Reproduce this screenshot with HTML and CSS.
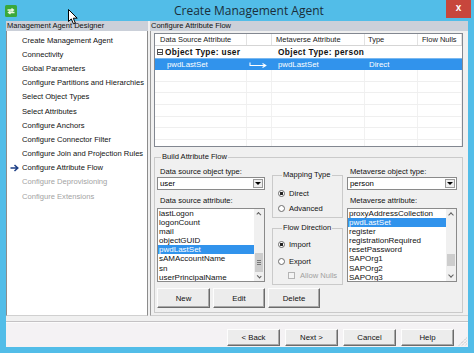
FILE: index.html
```html
<!DOCTYPE html>
<html>
<head>
<meta charset="utf-8">
<link rel="stylesheet" href="styles.css">
</head>
<body>
<div class="window">
  <div class="titlebar">
    <div class="appicon">
      <svg width="12" height="12" viewBox="0 0 12 12"><rect x="0" y="0" width="12" height="12" rx="1.5" fill="#3aa83a"/><path d="M2.5 5 H8 M6.5 3.5 L8.5 5 L6.5 6.5 M9.5 7.5 H4 M5.5 6 L3.5 7.5 L5.5 9" stroke="#e9f7e0" stroke-width="1.3" fill="none"/></svg>
    </div>
    <div class="title">Create Management Agent</div>
    <div class="close">x</div>
  </div>
  <div class="client">
    <div class="panes">
      <div class="leftpane">
        <div class="panehead">Management Agent Designer</div>
        <ul class="steps">
          <li><span class="mark"></span>Create Management Agent</li>
          <li><span class="mark"></span>Connectivity</li>
          <li><span class="mark"></span>Global Parameters</li>
          <li><span class="mark"></span>Configure Partitions and Hierarchies</li>
          <li><span class="mark"></span>Select Object Types</li>
          <li><span class="mark"></span>Select Attributes</li>
          <li><span class="mark"></span>Configure Anchors</li>
          <li><span class="mark"></span>Configure Connector Filter</li>
          <li><span class="mark"></span>Configure Join and Projection Rules</li>
          <li><span class="mark"><svg width="9" height="8" viewBox="0 0 9 8"><path d="M0.5 4 H7.5 M4.5 1 L7.8 4 L4.5 7" stroke="#1d3f86" stroke-width="1.5" fill="none"/></svg></span>Configure Attribute Flow</li>
          <li class="off"><span class="mark"></span>Configure Deprovisioning</li>
          <li class="off"><span class="mark"></span>Configure Extensions</li>
        </ul>
      </div>
      <div class="rightpane">
        <div class="panehead">Configure Attribute Flow</div>
        <div class="rightbody">
          <div class="grid">
            <div class="row head">
              <div class="c">Data Source Attribute</div>
              <div class="c"></div>
              <div class="c">Metaverse Attribute</div>
              <div class="c">Type</div>
              <div class="c">Flow Nulls</div>
            </div>
            <div class="row obj">
              <div class="c"><span class="minus"></span>Object Type: user</div>
              <div class="c"></div>
              <div class="c ind">Object Type: person</div>
              <div class="c"></div>
              <div class="c"></div>
            </div>
            <div class="row sel">
              <div class="c ind2">pwdLastSet</div>
              <div class="c arrowc"><svg width="18" height="7" viewBox="0 0 18 7"><path d="M1 1.5 V4.5 H16.5 M13.5 2.5 L16.8 4.5 L13.5 6.5" stroke="#ffffff" stroke-width="1.1" fill="none"/></svg></div>
              <div class="c ind">pwdLastSet</div>
              <div class="c">Direct</div>
              <div class="c"></div>
            </div>
            <div class="row empty"><div class="c"></div><div class="c"></div><div class="c"></div><div class="c"></div><div class="c"></div></div>
            <div class="row empty"><div class="c"></div><div class="c"></div><div class="c"></div><div class="c"></div><div class="c"></div></div>
            <div class="row empty"><div class="c"></div><div class="c"></div><div class="c"></div><div class="c"></div><div class="c"></div></div>
            <div class="row empty"><div class="c"></div><div class="c"></div><div class="c"></div><div class="c"></div><div class="c"></div></div>
            <div class="row empty"><div class="c"></div><div class="c"></div><div class="c"></div><div class="c"></div><div class="c"></div></div>
            <div class="row empty"><div class="c"></div><div class="c"></div><div class="c"></div><div class="c"></div><div class="c"></div></div>
            <div class="row empty"><div class="c"></div><div class="c"></div><div class="c"></div><div class="c"></div><div class="c"></div></div>
          </div>
          <fieldset class="build">
            <legend>Build Attribute Flow</legend>
            <div class="buildcols">
              <div class="col col1">
                <div class="lbl">Data source object type:</div>
                <div class="combo"><span class="val">user</span><span class="ddbtn"><span class="tri"></span></span></div>
                <div class="lbl lbl2">Data source attribute:</div>
                <div class="listbox">
                  <div class="items">
                    <div class="item">lastLogon</div>
                    <div class="item">logonCount</div>
                    <div class="item">mail</div>
                    <div class="item">objectGUID</div>
                    <div class="item selected">pwdLastSet</div>
                    <div class="item">sAMAccountName</div>
                    <div class="item">sn</div>
                    <div class="item">userPrincipalName</div>
                  </div>
                  <div class="vscroll">
                    <span class="sarrow up"></span>
                    <div class="track"><div class="thumb t1"><span class="grip"></span></div></div>
                    <span class="sarrow down"></span>
                  </div>
                </div>
              </div>
              <div class="col col2">
                <fieldset class="grp map">
                  <legend>Mapping Type</legend>
                  <div class="opt first"><span class="rb on"></span>Direct</div>
                  <div class="opt second"><span class="rb"></span>Advanced</div>
                </fieldset>
                <fieldset class="grp flow">
                  <legend>Flow Direction</legend>
                  <div class="opt first"><span class="rb on"></span>Import</div>
                  <div class="opt second2"><span class="rb"></span>Export</div>
                  <div class="opt third off"><span class="cb"></span>Allow Nulls</div>
                </fieldset>
              </div>
              <div class="col col3">
                <div class="lbl">Metaverse object type:</div>
                <div class="combo"><span class="val">person</span><span class="ddbtn"><span class="tri"></span></span></div>
                <div class="lbl lbl2">Metaverse attribute:</div>
                <div class="listbox">
                  <div class="items">
                    <div class="item">proxyAddressCollection</div>
                    <div class="item selected">pwdLastSet</div>
                    <div class="item">register</div>
                    <div class="item">registrationRequired</div>
                    <div class="item">resetPassword</div>
                    <div class="item">SAPOrg1</div>
                    <div class="item">SAPOrg2</div>
                    <div class="item">SAPOrg3</div>
                    <div class="item">SAPOrg4</div>
                  </div>
                  <div class="vscroll">
                    <span class="sarrow up"></span>
                    <div class="track"><div class="thumb t2"></div></div>
                    <span class="sarrow down"></span>
                  </div>
                </div>
              </div>
            </div>
            <div class="buildbtns">
              <div class="btn bnew">New</div>
              <div class="btn bedit">Edit</div>
              <div class="btn bdel">Delete</div>
            </div>
          </fieldset>
        </div>
      </div>
    </div>
    <div class="sep"></div>
    <div class="footer">
      <div class="btn fb">&lt; Back</div>
      <div class="btn fb">Next &gt;</div>
      <div class="btn fb">Cancel</div>
      <div class="btn fb">Help</div>
      <div class="grip-corner">
        <svg width="9" height="9" viewBox="0 0 9 9"><path d="M8.5 1 L1 8.5 M8.5 4 L4 8.5 M8.5 7 L7 8.5" stroke="#a8a8a8" stroke-width="1" stroke-dasharray="1 1" fill="none"/></svg>
      </div>
    </div>
  </div>
  <div class="cursor">
    <svg width="11" height="16" viewBox="0 0 11 16"><path d="M0.5 0.5 L0.5 12.5 L3.3 9.9 L5.4 14.8 L7.3 14 L5.3 9.2 L9.2 9.2 Z" fill="#ffffff" stroke="#000000" stroke-width="1"/></svg>
  </div>
</div>
</body>
</html>
```
FILE: styles.css
```css
* { box-sizing: border-box; }
html, body { margin: 0; padding: 0; }
body {
  width: 474px;
  height: 353px;
  overflow: hidden;
  font-family: "Liberation Sans", Arial, sans-serif;
  font-size: 8px;
  color: #000;
}
.window {
  position: relative;
  width: 474px;
  height: 353px;
  background: #52bde8;
  display: flex;
  flex-direction: column;
  padding: 0 6px 6px 6px;
}
.titlebar {
  height: 21px;
  flex: none;
  display: flex;
  align-items: flex-start;
}
.appicon {
  margin: 5px 0 0 -1px;
  width: 12px;
  height: 12px;
  line-height: 0;
}
.title {
  margin: 3px 0 0 157px;
  font-family: "Open Sans", "Noto Sans", sans-serif;
  font-size: 12px;
  line-height: 16px;
  color: #1a2e3a;
}
.close {
  margin: 0 -3px 0 auto;
  width: 25px;
  height: 18px;
  background: #c7463c;
  color: #fff;
  font-weight: bold;
  font-size: 10px;
  line-height: 16px;
  text-align: center;
}
.client {
  flex: 1;
  background: #f0f0f0;
  display: flex;
  flex-direction: column;
}
.panes {
  height: 295px;
  flex: none;
  display: flex;
  gap: 2px;
}
.panehead {
  height: 10px;
  line-height: 10px;
  font-size: 7.5px;
  padding-left: 1px;
  background: #cbd0d9;
  color: #111;
  white-space: nowrap;
}
.leftpane {
  width: 142px;
  display: flex;
  flex-direction: column;
}
.steps {
  flex: 1;
  margin: 0;
  list-style: none;
  padding: 2px 0 0 0;
  background: #fff;
  border-left: 1px solid #8c8c8c;
  border-right: 1px solid #8c8c8c;
  border-bottom: 1px solid #d0d0d0;
}
.steps li {
  display: flex;
  align-items: center;
  height: 14.2px;
  font-size: 7.6px;
  color: #111;
  white-space: nowrap;
}
.steps li.off { color: #a3a3a3; }
.mark {
  width: 15px;
  flex: none;
  padding-left: 3px;
  line-height: 0;
}
.rightpane {
  flex: 1;
  display: flex;
  flex-direction: column;
}
.rightbody {
  flex: 1;
  border-left: 1px solid #9a9a9a;
  border-bottom: 1px solid #d0d0d0;
  padding: 2px 4px 0 3px;
}
.grid {
  width: 309px;
  height: 114px;
  border: 1px solid #828790;
  background: #fff;
  overflow: hidden;
}
.row {
  display: grid;
  grid-template-columns: 92px 25px 93px 53px 44px;
  height: 12px;
}
.row .c {
  white-space: nowrap;
  overflow: hidden;
  display: flex;
  align-items: center;
}
.head {
  height: 12px;
  border-bottom: 1px solid #d5d5d5;
  font-size: 7.5px;
  color: #222;
}
.head .c {
  border-right: 1px solid #e2e2e2;
  padding-left: 5px;
}
.head .c:nth-child(3) { padding-left: 4px; }
.head .c:nth-child(4) { padding-left: 3px; }
.head .c:nth-child(5) { padding-left: 4px; }
.obj {
  font-weight: bold;
  font-size: 8.3px;
  letter-spacing: 0.35px;
  color: #111;
}
.obj .c:first-child { padding-left: 2px; }
.minus {
  width: 6px;
  height: 6px;
  border: 1px solid #555;
  margin-right: 2px;
  flex: none;
  background: linear-gradient(#444, #444) center / 4px 1px no-repeat;
}
.ind { padding-left: 6px; }
.ind2 { padding-left: 12px; }
.sel {
  background: #3193ec;
  border-top: 1px solid #7ab8f0;
  color: #fff;
  font-size: 7.8px;
}
.sel .c:nth-child(4) { padding-left: 4px; }
.arrowc { padding-left: 2px; line-height: 0; }
.empty {
  height: 11.67px;
  border-bottom: 1px solid #efefef;
}
.empty .c { border-right: 1px solid #f1f1f1; }
fieldset {
  margin: 0;
  padding: 0;
  min-width: 0;
  border: 1px solid #cacaca;
}
legend {
  padding: 0 1px;
  margin-left: 3px;
  height: 10px;
  line-height: 10px;
  font-size: 7.6px;
  color: #111;
}
.build {
  width: 309px;
  margin-top: 5px;
  padding: 0 4px 4px 3px;
}
.buildcols {
  display: flex;
  align-items: flex-start;
}
.col1 { width: 107px; padding-top: 5px; }
.col2 { width: 71px; margin-left: 7px; padding-top: 8px; }
.col3 { width: 109px; margin-left: 5px; padding-top: 5px; }
.lbl {
  height: 10px;
  line-height: 10px;
  font-size: 7.6px;
  color: #111;
  white-space: nowrap;
  padding-left: 2px;
}
.col1 .lbl { padding-left: 2px; }
.lbl2 { margin-top: 6px; }
.combo {
  height: 13px;
  display: flex;
  border: 1px solid #8a8a8a;
  background: #fff;
  margin-left: -1px;
}
.combo .val {
  flex: 1;
  padding-left: 2px;
  line-height: 11px;
  font-size: 7.8px;
}
.ddbtn {
  width: 10px;
  margin: 1px;
  border: 1px solid #9a9a9a;
  background: #eeeeee;
  display: flex;
  align-items: center;
  justify-content: center;
}
.tri {
  width: 0;
  height: 0;
  border-left: 3px solid transparent;
  border-right: 3px solid transparent;
  border-top: 3px solid #000;
}
.listbox {
  margin-top: 2px;
  margin-left: -1px;
  height: 74px;
  display: flex;
  border: 1px solid #8a8a8a;
  background: #fff;
}
.items {
  flex: 1;
  overflow: hidden;
}
.item {
  height: 9.1px;
  line-height: 9.1px;
  font-size: 8px;
  padding-left: 1px;
  white-space: nowrap;
  color: #111;
}
.item.selected {
  background: #3193ec;
  color: #fff;
}
.vscroll {
  width: 10px;
  background: #f0f0f0;
  display: flex;
  flex-direction: column;
  align-items: center;
}
.sarrow {
  width: 4px;
  height: 4px;
  border-left: 1px solid #606060;
  border-top: 1px solid #606060;
  margin: 3px 0;
}
.sarrow.up { transform: rotate(45deg); margin-top: 4px; }
.sarrow.down { transform: rotate(225deg); margin-bottom: 4px; }
.track {
  flex: 1;
  width: 100%;
  display: flex;
  flex-direction: column;
}
.thumb {
  background: #cdcdcd;
  margin: 0 1px;
  display: flex;
  align-items: center;
  justify-content: center;
}
.t1 { margin-top: 34px; height: 19px; }
.t2 { margin-top: 34px; height: 12px; }
.grip {
  width: 4px;
  height: 5px;
  border-top: 1px solid #777;
  border-bottom: 1px solid #777;
  background: linear-gradient(#777, #777) center / 4px 1px no-repeat;
}
.grp {
  width: 71px;
}
.grp legend { margin-left: 4px; }
.map { padding: 0 0 4px 5px; }
.flow { margin-top: 5px; padding: 0 0 4px 5px; }
.opt {
  height: 10px;
  display: flex;
  align-items: center;
  font-size: 7.6px;
  color: #111;
  white-space: nowrap;
}
.map .first { margin-top: 8px; }
.map .second { margin-top: 5px; }
.flow .first { margin-top: 6px; }
.flow .second2 { margin-top: 7px; }
.flow .third { margin-top: 4px; padding-left: 10px; }
.opt.off { color: #a0a0a0; }
.rb {
  width: 7px;
  height: 7px;
  border-radius: 50%;
  border: 1px solid #6c6c6c;
  background: #fff;
  margin-right: 4px;
  flex: none;
}
.rb.on {
  background: radial-gradient(circle, #222 0, #222 1.4px, #fff 1.8px);
}
.cb {
  width: 7px;
  height: 7px;
  border: 1px solid #b4b4b4;
  background: #f4f4f4;
  margin-right: 5px;
  flex: none;
}
.buildbtns {
  display: flex;
  gap: 3px;
  margin: 3px 0 0 -1px;
}
.btn {
  height: 20px;
  display: flex;
  align-items: center;
  justify-content: center;
  font-size: 7.8px;
  color: #111;
  background: #ececec;
  border: 1px solid;
  border-color: #fdfdfd #6b6b6b #6b6b6b #fdfdfd;
  box-shadow: inset -1px -1px 0 #a8a8a8;
}
.bnew { width: 53px; }
.bedit { width: 52px; }
.bdel { width: 52px; }
.sep {
  margin-top: 5px;
  height: 2px;
  flex: none;
  border-top: 1px solid #c4c2c4;
  border-bottom: 1px solid #fbfbfb;
}
.footer {
  flex: 1;
  display: flex;
  justify-content: flex-end;
  align-items: flex-start;
  gap: 5px;
  padding: 6px 1px 0 0;
  background: #f4f2f4;
}
.fb { width: 53px; height: 17px; }
.grip-corner {
  align-self: flex-end;
  width: 9px;
  height: 9px;
  margin-left: -1px;
  margin-bottom: 1px;
  line-height: 0;
}
.cursor {
  position: absolute;
  left: 68px;
  top: 9px;
  line-height: 0;
}
```
